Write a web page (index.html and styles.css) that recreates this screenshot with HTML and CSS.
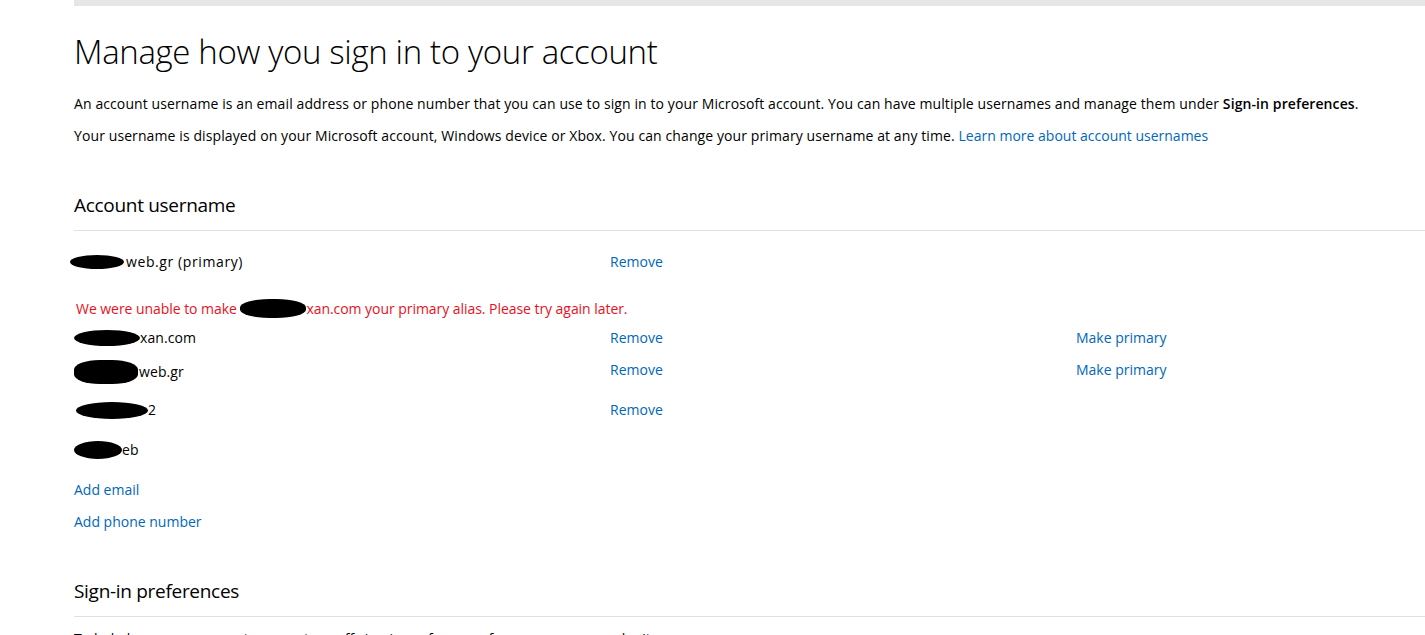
FILE: index.html
```html
<!DOCTYPE html>
<html lang="en">
<head>
    <meta charset="UTF-8">
    <meta name="viewport" content="width=device-width, initial-scale=1.0">
    <title>Manage how you sign in to your account</title>
    <link rel="stylesheet" href="styles.css">
</head>
<body>
    <div class="topbar"></div>
    <div class="page">
        <h1>Manage how you sign in to your account</h1>
        <p class="intro">An account username is an email address or phone number that you can use to sign in to your Microsoft account. You can have multiple usernames and manage them under <b>Sign-in preferences</b>.</p>
        <p class="intro second">Your username is displayed on your Microsoft account, Windows device or Xbox. You can change your primary username at any time. <a href="#">Learn more about account usernames</a></p>

        <h2 class="section first">Account username</h2>

        <div class="alias row1">
            <span class="name primary"><span class="blot b1"></span>web.gr (primary)</span>
            <a href="#">Remove</a>
            <span></span>
        </div>
        <div class="error">We were unable to make <span class="blot b2"></span>xan.com your primary alias. Please try again later.</div>
        <div class="alias tight">
            <span class="name"><span class="blot b3"></span>xan.com</span>
            <a href="#">Remove</a>
            <a href="#">Make primary</a>
        </div>
        <div class="alias gap12">
            <span class="name"><span class="blot b4"></span>web.gr</span>
            <a href="#">Remove</a>
            <a href="#">Make primary</a>
        </div>
        <div class="alias gap20">
            <span class="name"><span class="blot b5"></span>2</span>
            <a href="#">Remove</a>
            <span></span>
        </div>
        <div class="alias gap20">
            <span class="name"><span class="blot b6"></span>eb</span>
            <span></span>
            <span></span>
        </div>
        <div class="add gap20"><a href="#">Add email</a></div>
        <div class="add gap12"><a href="#">Add phone number</a></div>

        <h2 class="section">Sign-in preferences</h2>
        <p class="intro cut">To help keep your account secure, turn off sign-in preferences for usernames you don't use.</p>
    </div>
</body>
</html>
```

FILE: styles.css
```css
body {
    margin: 0;
    font-family: "Open Sans", "Noto Sans", sans-serif;
    font-size: 14px;
    color: #000000;
    background: #ffffff;
    overflow: hidden;
}
a {
    color: #0067b8;
    text-decoration: none;
}
.topbar {
    margin-left: 74px;
    height: 6px;
    background-color: #e6e6e6;
}
.page {
    padding-left: 74px;
}
h1 {
    margin: 26px 0 0;
    font-size: 33px;
    font-weight: 300;
    line-height: 40px;
    letter-spacing: -0.35px;
}
.intro {
    margin: 22px 0 0;
    line-height: 20px;
    letter-spacing: 0.1px;
    white-space: nowrap;
}
.intro b {
    font-weight: 600;
}
.intro.second {
    margin-top: 12px;
}
.intro.second a {
    letter-spacing: 0;
}
.section {
    margin: 46px 0 0;
    padding-bottom: 12px;
    font-size: 19px;
    font-weight: 400;
    line-height: 26px;
    letter-spacing: -0.3px;
    border-bottom: 1px solid #e0e0e0;
}
.alias {
    display: grid;
    grid-template-columns: 536px 466px 1fr;
    line-height: 20px;
    height: 20px;
}
.row1 {
    margin-top: 21px;
}
.name {
    display: flex;
    align-items: center;
    letter-spacing: 0.1px;
}
.name.primary {
    letter-spacing: 0.6px;
}
.blot {
    display: inline-block;
    background: #000000;
    border-radius: 50%;
}
.b1 { width: 54px; height: 14px; margin-left: -4px; margin-right: 2px; }
.b2 { width: 66px; height: 19px; border-radius: 45%; vertical-align: -4px; margin-left: 0; }
.b3 { width: 66px; height: 16px; }
.b4 { width: 64px; height: 24px; border-radius: 40%; margin-right: 1px; }
.b5 { width: 72px; height: 17px; margin-left: 2px; }
.b6 { width: 48px; height: 18px; }
.error {
    margin-top: 27px;
    margin-left: 2px;
    line-height: 20px;
    color: #e81123;
    letter-spacing: -0.05px;
}
.tight {
    margin-top: 9px;
}
.gap12 {
    margin-top: 12px;
}
.gap20 {
    margin-top: 20px;
}
.add {
    line-height: 20px;
}
.section + .cut {
    margin-top: 12px;
}
```
